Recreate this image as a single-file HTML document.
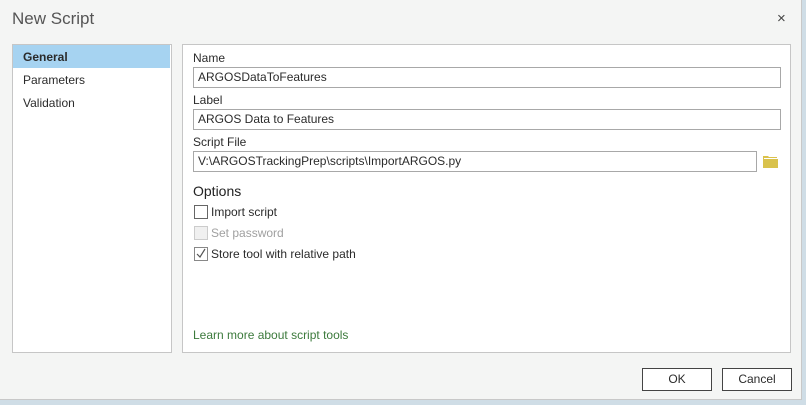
<!DOCTYPE html>
<html><head><style>
body{margin:0;width:806px;height:405px;background:#cfdde6;position:relative;overflow:hidden;font-family:"Liberation Sans",sans-serif;font-size:12px;color:#2b2b2b}
.dlg{position:absolute;left:0;top:0;width:801px;height:399px;background:#f4f5f4;border-right:1px solid #c8c8c8;border-bottom:1px solid #c8c8c8}
.a{position:absolute}
.panel{background:#fff;border:1px solid #c6c6c6}
.inp{position:absolute;background:#fff;border:1px solid #a8a8a8;line-height:19px;padding-left:4px;box-sizing:border-box;height:21px}
.cb{position:absolute;width:12px;height:12px;border:1px solid #666;background:#fff}
.btn{position:absolute;border:1px solid #444;background:#fff;text-align:center;line-height:21px;height:21px}
</style></head><body>
<div class="dlg">
<div class="a" style="left:12px;top:9px;font-size:17px;color:#555">New Script</div>
<div class="a" style="left:777px;top:10px;font-size:15px;color:#444">×</div>
<div class="a panel" style="left:12px;top:44px;width:158px;height:307px"></div>
<div class="a" style="left:13px;top:45px;width:157px;height:23px;background:#a6d3f1"></div>
<div class="a" style="left:23px;top:50px;font-weight:bold">General</div>
<div class="a" style="left:23px;top:73px">Parameters</div>
<div class="a" style="left:23px;top:96px">Validation</div>
<div class="a panel" style="left:182px;top:44px;width:607px;height:307px"></div>
<div class="a" style="left:193px;top:51px">Name</div>
<div class="inp" style="left:193px;top:67px;width:588px">ARGOSDataToFeatures</div>
<div class="a" style="left:193px;top:93px">Label</div>
<div class="inp" style="left:193px;top:109px;width:588px">ARGOS Data to Features</div>
<div class="a" style="left:193px;top:135px">Script File</div>
<div class="inp" style="left:193px;top:151px;width:564px">V:\ARGOSTrackingPrep\scripts\ImportARGOS.py</div>
<svg class="a" style="left:763px;top:155px" width="16" height="14"><path d="M0 1h5l1 1h8v2H0z" fill="#dcc24a"/><path d="M0 4h15v9H0z" fill="#d9c24c"/><path d="M1 3h13v1H1z" fill="#fff"/></svg>
<div class="a" style="left:193px;top:183px;font-size:14px;color:#222">Options</div>
<div class="cb" style="left:194px;top:205px"></div>
<div class="a" style="left:211px;top:205px">Import script</div>
<div class="cb" style="left:194px;top:226px;border-color:#ccc;background:#f0f0f0"></div>
<div class="a" style="left:211px;top:226px;color:#a0a0a0">Set password</div>
<div class="cb" style="left:194px;top:247px;border-color:#888"></div>
<svg class="a" style="left:195px;top:248px" width="12" height="12"><path d="M2 6l3 3 5-8" stroke="#555" fill="none" stroke-width="1.2"/></svg>
<div class="a" style="left:211px;top:247px">Store tool with relative path</div>
<div class="a" style="left:193px;top:328px;color:#3c7a3c">Learn more about script tools</div>
<div class="btn" style="left:642px;top:368px;width:68px">OK</div>
<div class="btn" style="left:722px;top:368px;width:68px">Cancel</div>
</div>
</body></html>
